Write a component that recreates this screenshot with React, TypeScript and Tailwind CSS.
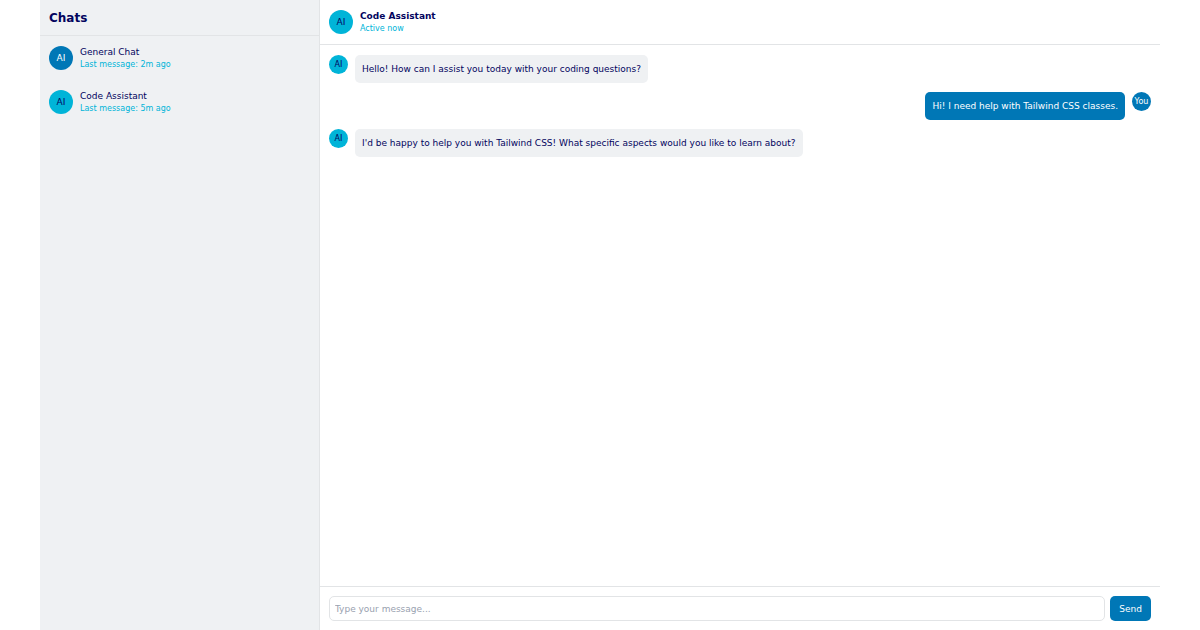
const chats = [
  { name: 'General Chat', time: '2m ago', avatar: 'bg-[#0077b6] text-white' },
  { name: 'Code Assistant', time: '5m ago', avatar: 'bg-[#00b4d8] text-[#03045e]' },
];

const messages = [
  { from: 'ai', text: 'Hello! How can I assist you today with your coding questions?' },
  { from: 'user', text: 'Hi! I need help with Tailwind CSS classes.' },
  {
    from: 'ai',
    text: "I'd be happy to help you with Tailwind CSS! What specific aspects would you like to learn about?",
  },
];

function Sidebar() {
  return (
    <aside className="w-1/4 bg-[#eff1f3] border-r border-[#e2e4e6]">
      <div className="px-[9px] h-9 flex items-center border-b border-[#e2e4e6]">
        <h2 className="text-[12px] leading-[16px] font-bold">Chats</h2>
      </div>
      <nav>
        {chats.map((chat) => (
          <a key={chat.name} href="#" className="flex items-center gap-[7px] px-[9px] py-[9px]">
            <span
              className={`w-6 h-6 shrink-0 rounded-full flex items-center justify-center ${chat.avatar}`}
            >
              AI
            </span>
            <span className="flex flex-col">
              <span>{chat.name}</span>
              <span className="text-[8px] leading-[12px] text-[#00b4d8]">
                Last message: {chat.time}
              </span>
            </span>
          </a>
        ))}
      </nav>
    </aside>
  );
}

function Message({ from, text }: { from: string; text: string }) {
  if (from === 'user') {
    return (
      <div className="flex items-start justify-end gap-[7px]">
        <p className="p-[7px] rounded-[5px] bg-[#0077b6] text-white">{text}</p>
        <div className="w-[19px] h-[19px] shrink-0 rounded-full bg-[#0077b6] text-white text-[8px] leading-[12px] flex items-center justify-center">
          You
        </div>
      </div>
    );
  }

  return (
    <div className="flex items-start gap-[7px]">
      <div className="w-[19px] h-[19px] shrink-0 rounded-full bg-[#00b4d8] text-[8px] leading-[12px] flex items-center justify-center">
        AI
      </div>
      <p className="p-[7px] rounded-[5px] bg-[#eff1f3]">{text}</p>
    </div>
  );
}

export default function App() {
  return (
    <div className="h-screen bg-white px-10 font-['DejaVu_Sans',sans-serif] text-[9px] leading-[14px] text-[#03045e]">
      <div className="flex h-full">
        <Sidebar />

        <main className="flex-1 flex flex-col">
          <header className="flex items-center gap-[7px] px-[9px] py-[9px] border-b border-[#e2e4e6]">
            <div className="w-6 h-6 rounded-full bg-[#00b4d8] flex items-center justify-center">
              AI
            </div>
            <div>
              <h3 className="font-bold">Code Assistant</h3>
              <p className="text-[8px] leading-[12px] text-[#00b4d8]">Active now</p>
            </div>
          </header>

          <div className="flex-1 overflow-y-auto px-[9px] py-[10px] flex flex-col gap-[9px]">
            {messages.map((message) => (
              <Message key={message.text} from={message.from} text={message.text} />
            ))}
          </div>

          <form
            className="flex gap-[5px] px-[9px] py-[9px] border-t border-[#e2e4e6]"
            onSubmit={(e) => e.preventDefault()}
          >
            <input
              type="text"
              aria-label="Message"
              placeholder="Type your message..."
              className="flex-1 h-[25px] px-[5px] rounded-[5px] border border-[#e2e4e6] placeholder:text-gray-400"
            />
            <button type="submit" className="px-[9px] rounded-[5px] bg-[#0077b6] text-white">
              Send
            </button>
          </form>
        </main>
      </div>
    </div>
  );
}
